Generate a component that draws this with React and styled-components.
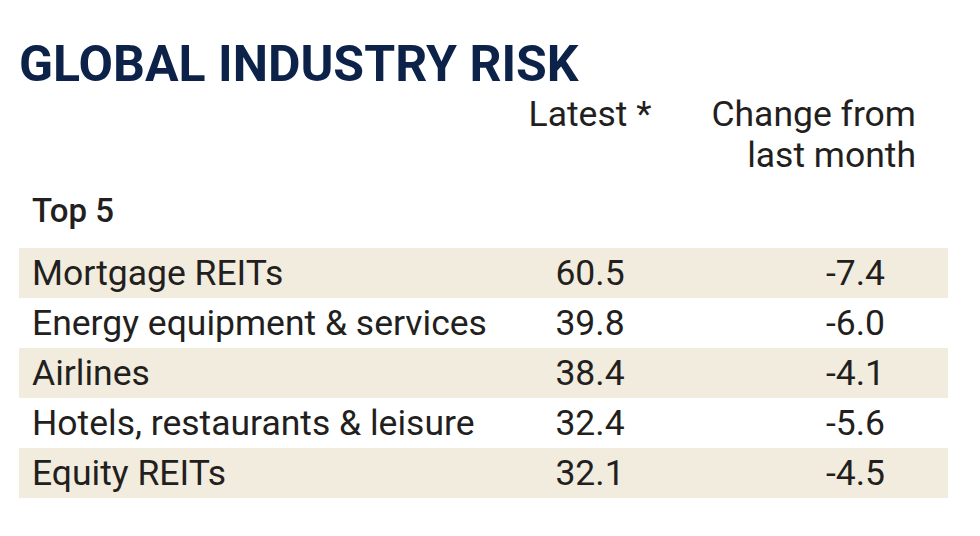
import React from 'react';
import styled, { createGlobalStyle } from 'styled-components';

const rows = [
  { name: 'Mortgage REITs', latest: '60.5', change: '-7.4' },
  { name: 'Energy equipment & services', latest: '39.8', change: '-6.0' },
  { name: 'Airlines', latest: '38.4', change: '-4.1' },
  { name: 'Hotels, restaurants & leisure', latest: '32.4', change: '-5.6' },
  { name: 'Equity REITs', latest: '32.1', change: '-4.5' },
];

const App = () => (<Page>
  <GlobalStyle />
  <Title>GLOBAL INDUSTRY RISK</Title>
  <HeadRow>
    <span />
    <HeadCell>Latest *</HeadCell>
    <HeadCell $right>Change from<br />last month</HeadCell>
  </HeadRow>
  <Section>Top 5</Section>
  <Table>
    {rows.map((r, i) => (
      <Row key={r.name} $shaded={i % 2 === 0}>
        <Name>{r.name}</Name>
        <Latest>{r.latest}</Latest>
        <Change>{r.change}</Change>
      </Row>
    ))}
  </Table>
</Page>)

const GlobalStyle = createGlobalStyle`
  body {
    margin: 0;
    background: #ffffff;
    font-family: Roboto, "Liberation Sans", sans-serif;
  }
`;

const Page = styled.div`
  width: 980px;
  height: 536px;
  padding: 36px 32px 0 19px;
  box-sizing: border-box;
  color: #231f20;
`;

const Title = styled.h1`
  margin: 0;
  font-size: 50px;
  line-height: 56px;
  font-weight: 700;
  color: #0c2249;
`;

const cols = `
  display: grid;
  grid-template-columns: 1fr 140px 288px;
`;

const HeadRow = styled.div`
  ${cols}
  align-items: start;
  margin-top: 2px;
`;

const HeadCell = styled.div`
  font-size: 35.5px;
  line-height: 41px;
  text-align: ${p => (p.$right ? 'right' : 'center')};
  padding-right: ${p => (p.$right ? '32px' : '0')};
`;

const Section = styled.div`
  font-size: 33px;
  line-height: 40px;
  font-weight: 500;
  padding: 15px 0 0 13px;
  height: 72px;
  box-sizing: border-box;
`;

const Table = styled.div`
  display: flex;
  flex-direction: column;
`;

const Row = styled.div`
  ${cols}
  align-items: center;
  height: 50px;
  background: ${p => (p.$shaded ? '#f1ecdd' : 'transparent')};
  font-size: 35.5px;
`;

const Name = styled.div`
  padding-left: 13px;
`;

const Latest = styled.div`
  text-align: center;
`;

const Change = styled.div`
  text-align: right;
  padding-right: 63px;
`;

export default App;
